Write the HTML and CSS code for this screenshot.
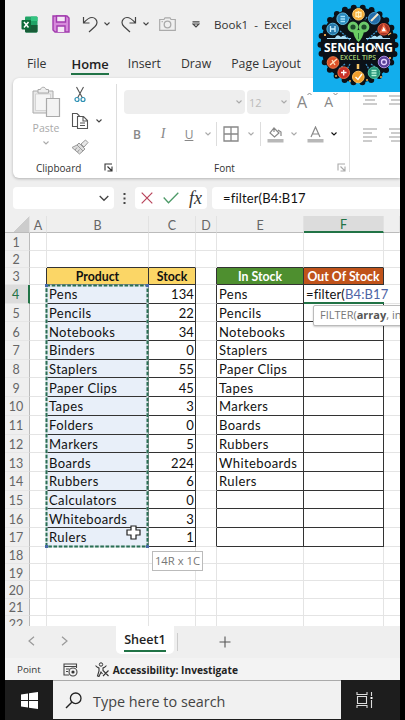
FILE: index.html
```
<!DOCTYPE html>
<html lang="en">
<head>
    <meta charset="UTF-8">
    <meta name="viewport" content="width=device-width, initial-scale=1.0">
    <title>Book1 - Excel</title>
    <link rel="stylesheet" href="styles.css">
</head>
<body>
    <svg class="defs" width="0" height="0">
        <symbol id="chevron" viewBox="0 0 8 6"><path d="M1.5 1.5 4 4 6.500 1.500" fill="none" stroke="currentColor" stroke-width="1.1"/></symbol>
        <symbol id="launcher" viewBox="0 0 9 9"><path d="M1 7.500V1H8M3.500 3.500 7.500 7.500M8 3.500V8H3.500" fill="none" stroke="currentColor" stroke-width="1.1"/></symbol>
    </svg>

    <div id="app">
        <header class="title-bar">
            <svg class="excel-icon" width="17" height="17" viewBox="0 0 17 17">
                <rect x="4" y="0.500" width="12.500" height="16" rx="1" fill="#21a366"/>
                <path d="M4 4.500H10V12H4Z" fill="#107c41"/>
                <path d="M10 .5H15.500L16.500 1.500V5H10Z" fill="#33c481"/>
                <path d="M10 9H16.500V15.500L15.500 16.500H5L4 15.500V12H10Z" fill="#185c37"/>
                <rect x="0.500" y="4" width="9.500" height="9.500" rx="1" fill="#0d6b39"/>
                <path d="M3 6 7.500 11.500M7.500 6 3 11.500" stroke="#fff" stroke-width="1.500"/>
            </svg>
            <svg class="save-icon" width="18" height="18" viewBox="0 0 18 18">
                <path d="M1 1H15L17 3V17H3L1 15Z" fill="#d68bdb" stroke="#a23bae" stroke-width="1.400"/>
                <path d="M4.500 1H13.500V7H4.500ZM5 17V11H13V17" fill="#f4e8f5" stroke="#a23bae" stroke-width="1.400"/>
            </svg>
            <svg class="undo-icon" width="16" height="17" viewBox="0 0 16 17"><path d="M1.500 1V7H7.500M1.500 7C5 3 7 1.500 10 1.500C13 1.500 15 4 15 6.500C15 8.500 14 9.500 13 10.500L7 16" fill="none" stroke="#444" stroke-width="1.200"/></svg>
            <svg class="chevron dark" width="8" height="6"><use href="#chevron"/></svg>
            <svg class="redo-icon" width="16" height="17" viewBox="0 0 16 17"><path d="M14.500 1V7H8.500M14.500 7C11 3 9 1.500 6 1.500C3 1.500 1 4 1 6.500C1 8.500 2 9.500 3 10.500L9 16" fill="none" stroke="#444" stroke-width="1.200"/></svg>
            <svg class="chevron dark" width="8" height="6"><use href="#chevron"/></svg>
            <svg class="camera-icon" width="17" height="14" viewBox="0 0 17 14"><path d="M.7 2.500H5L6 .8H11L12 2.500H16.300V13.300H.7Z" fill="none" stroke="#aaa" stroke-width="1.200"/><circle cx="8.500" cy="7.500" r="3.300" fill="none" stroke="#aaa" stroke-width="1.300"/><path d="M2.500 4.700H4" stroke="#aaa"/></svg>
            <svg class="more-icon" width="8" height="7" viewBox="0 0 8 7"><path d="M.5 .8H7.500M1 3 4 6 7 3Z" stroke="#444" fill="none" stroke-width="1.200"/></svg>
            <span class="doc-name">Book1&nbsp; -&nbsp; Excel</span>
        </header>

        <nav class="tabs">
            <span>File</span>
            <span class="active">Home</span>
            <span>Insert</span>
            <span>Draw</span>
            <span>Page Layout</span>
        </nav>

        <section class="ribbon">
            <div class="group clipboard">
                <div class="group-body">
                    <div class="paste">
                        <svg width="29" height="32" viewBox="0 0 29 32"><path d="M1 5H21V27H1Z" fill="#e9e9e9" stroke="#aaa"/><path d="M3.500 8H18.500V24.500H3.500Z" fill="#f5f5f5" stroke="#c8c8c8" stroke-width=".7"/><path d="M6 7V3.500H8.500C9 .5 13.500 .5 14 3.500H16.500V7Z" fill="#eee" stroke="#aaa"/><path d="M14.500 12.500H27.500V30.500H14.500Z" fill="#f3f3f3" stroke="#aaa" stroke-width="1.200"/></svg>
                        <span>Paste</span>
                        <svg class="chevron" width="8" height="6"><use href="#chevron"/></svg>
                    </div>
                    <div class="clip-tools">
                        <svg width="18" height="18" viewBox="0 0 18 18"><path d="M5.500 1 11.500 12M12.500 1 6.500 12" stroke="#555" stroke-width="1.100"/><circle cx="6" cy="13.500" r="2" fill="none" stroke="#2b8fb3" stroke-width="1.200"/><circle cx="12" cy="13.500" r="2" fill="none" stroke="#2b8fb3" stroke-width="1.200"/></svg>
                        <div class="copy">
                            <svg width="18" height="18" viewBox="0 0 18 18"><path d="M6 14.500H1.500V1.500H6L8.500 4M6.500 4.500H12.500L16.500 8.500V16.500H6.500ZM12 4.500V9H16.500M9 11H14M9 13.500H14" fill="none" stroke="#555" stroke-width="1.100"/></svg>
                            <svg class="chevron dark" width="8" height="6"><use href="#chevron"/></svg>
                        </div>
                        <svg width="18" height="18" viewBox="0 0 18 18"><path d="M10 6 14.500 2 17 4.500 13 9Z" fill="#e8e8e8" stroke="#999"/><path d="M8 5 14 11 12 13 6 7ZM6 7 1 9.500 8.500 16 12 13M4 12 6 9.500M6.500 14 8.500 11.500" fill="#ddd" stroke="#999"/></svg>
                    </div>
                </div>
                <div class="group-label"><span>Clipboard</span><svg width="9" height="9"><use href="#launcher"/></svg></div>
            </div>

            <div class="group font">
                <div class="group-body">
                    <div class="font-row">
                        <div class="combo family"><svg class="chevron" width="8" height="6"><use href="#chevron"/></svg></div>
                        <div class="combo size"><span>12</span><svg class="chevron" width="8" height="6"><use href="#chevron"/></svg></div>
                        <span class="grow">A<svg width="5" height="4" viewBox="0 0 5 4"><path d="M.5 3 2.500 1 4.500 3" fill="none" stroke="#888"/></svg></span>
                        <span class="shrink">A<svg width="5" height="4" viewBox="0 0 5 4"><path d="M.5 1 2.500 3 4.500 1" fill="none" stroke="#888"/></svg></span>
                    </div>
                    <div class="style-row">
                        <span class="tool bold">B</span>
                        <span class="tool italic">I</span>
                        <span class="tool underline">U</span>
                        <span class="drop"><svg class="chevron" width="8" height="6"><use href="#chevron"/></svg></span>
                        <span class="divider"></span>
                        <span class="tool"><svg width="16" height="16" viewBox="0 0 16 16"><path d="M1 1H15V15H1ZM8 1V15M1 8H15" fill="none" stroke="#888" stroke-width="1.300"/></svg></span>
                        <span class="drop wide"><svg class="chevron" width="8" height="6"><use href="#chevron"/></svg></span>
                        <span class="divider"></span>
                        <span class="tool"><svg width="17" height="17" viewBox="0 0 17 17"><path d="M7 2 12 7 7.500 11 3 7ZM7 2V6M11 4 14 6V10" fill="none" stroke="#888" stroke-width="1.200"/><rect x="0.500" y="13" width="16" height="3.500" fill="#b8b8b8"/></svg></span>
                        <span class="drop"><svg class="chevron" width="8" height="6"><use href="#chevron"/></svg></span>
                        <span class="tool font-color"><svg width="17" height="17" viewBox="0 0 17 17"><path d="M4 11 8.500 1 13 11M5.500 8H11.500" fill="none" stroke="#888" stroke-width="1.200"/><rect x="0.500" y="13" width="16" height="3.500" fill="#b8b8b8"/></svg></span>
                        <span class="drop"><svg class="chevron black" width="8" height="6"><use href="#chevron"/></svg></span>
                    </div>
                </div>
                <div class="group-label"><span>Font</span><svg width="9" height="9"><use href="#launcher"/></svg></div>
            </div>

            <div class="group align">
                <svg width="16" height="10" viewBox="0 0 16 10"><path d="M1 1H15M3 5H13M1 9H15" stroke="#999"/></svg>
                <svg width="16" height="10" viewBox="0 0 16 10"><path d="M1 1H15M3 5H13M1 9H15" stroke="#999"/></svg>
                <svg width="16" height="14" viewBox="0 0 16 14"><path d="M1 1H15M1 5H10M1 9H15M1 13H10" stroke="#999"/></svg>
                <svg width="16" height="14" viewBox="0 0 16 14"><path d="M1 1H15M3 5H13M1 9H15M3 13H13" stroke="#999"/></svg>
            </div>
        </section>

        <section class="formula-bar">
            <div class="name-box"><svg width="10" height="7" viewBox="0 0 10 7"><path d="M.7 1 5 5.300 9.300 1" fill="none" stroke="#444" stroke-width="1.300"/></svg></div>
            <svg class="dots" width="3" height="11" viewBox="0 0 3 11"><path d="M.5 0H2.500V2H.5ZM.5 4.500H2.500V6.500H.5ZM.5 9H2.500V11H.5Z" fill="#444"/></svg>
            <div class="fx-box">
                <svg width="12" height="12" viewBox="0 0 12 12"><path d="M.7 .7 11.300 11.300M11.300 .7 .7 11.300" stroke="#b8435a" stroke-width="1.200"/></svg>
                <svg width="16" height="12" viewBox="0 0 16 12"><path d="M.7 5.500 5.500 10.700 15.300 .8" fill="none" stroke="#4d9a68" stroke-width="1.300"/></svg>
                <span>fx</span>
            </div>
            <div class="formula">=filter(B4:B17</div>
        </section>

        <section class="sheet">
            <div id="grid"></div>
            <svg class="marquee" width="104" height="264">
                <rect class="gap" x="1.500" y="1.500" width="101" height="261"/>
                <rect x="1.500" y="1.500" width="101" height="261"/>
                <path d="M0 0H3V3H0ZM101 0H104V3H101ZM0 261H3V264H0ZM101 261H104V264H101Z" fill="#4668a8"/>
            </svg>
            <div class="hint">FILTER(<b>array</b>, in</div>
            <div class="size-tip">14R x 1C</div>
            <svg class="cross-cursor" width="15" height="15" viewBox="0 0 15 15"><path d="M5 1H10V5H14V10H10V14H5V10H1V5H5Z" fill="#fff" stroke="#222" stroke-width="1.200"/></svg>
        </section>

        <section class="sheet-tabs">
            <svg width="7" height="10" viewBox="0 0 7 10"><path d="M6 .7 1 5 6 9.300" fill="none" stroke="#999" stroke-width="1.200"/></svg>
            <svg width="7" height="10" viewBox="0 0 7 10"><path d="M1 .7 6 5 1 9.300" fill="none" stroke="#999" stroke-width="1.200"/></svg>
            <div class="sheet-tab"><span>Sheet1</span></div>
            <i class="tab-line"></i>
            <svg class="plus" width="12" height="12" viewBox="0 0 12 12"><path d="M6 .5V11.500M.5 6H11.500" stroke="#555" stroke-width="1.100"/></svg>
        </section>

        <section class="status-bar">
            <span class="mode">Point</span>
            <svg class="macro" width="15" height="14" viewBox="0 0 15 14"><path d="M6 12H1V1H13.500V5M1 3.500H13.500M3 6H6.500M3 8.500H5" fill="none" stroke="#444" stroke-width="1.100"/><circle cx="10" cy="9" r="4" fill="#f1f1f1" stroke="#444" stroke-width="1.100"/><circle cx="10" cy="9" r="1.600" fill="#333"/></svg>
            <svg class="access" width="15" height="15" viewBox="0 0 15 15"><circle cx="6" cy="2.500" r="1.700" fill="none" stroke="#333"/><path d="M1 3.500C.5 5 3 5 4 6V9L2.500 14L4 14.500L6 10L7.500 12M11 3.500C11.500 5 9 5 8 6V8.500L13.500 14M8 14 13.500 8.500" fill="none" stroke="#333" stroke-width="1.100"/></svg>
            <b>Accessibility: Investigate</b>
        </section>

        <footer class="taskbar">
            <div class="start"><svg width="17" height="17" viewBox="0 0 17 17"><path d="M0 2.500 7 1.500V8H0ZM8 1.300 17 0V8H8ZM0 9H7V15.500L0 14.500ZM8 9H17V17L8 15.700Z" fill="#fff"/></svg></div>
            <div class="search">
                <svg width="17" height="17" viewBox="0 0 17 17"><circle cx="10.700" cy="6.300" r="5.300" fill="none" stroke="#222" stroke-width="1.300"/><path d="M6.800 10.200 1 16" stroke="#222" stroke-width="1.400"/></svg>
                <span>Type here to search</span>
            </div>
            <div class="task-view"><svg width="18" height="16" viewBox="0 0 18 16"><path d="M1 0V2.500H11V0M1 16V13.500H11V16M1.500 4.500H10.500V11.500H1.500ZM15.500 0V4M15.500 8V16" fill="none" stroke="#ddd" stroke-width="1.100"/><rect x="14.500" y="5" width="2" height="2" fill="#fff"/></svg></div>
        </footer>

        <div class="logo">
            <svg width="87" height="92" viewBox="0 0 87 92">
                <circle cx="45" cy="45" r="37.500" fill="#0b1118"/>
                <circle cx="45" cy="45" r="37.500" fill="none" stroke="#0b1118" stroke-width="6" stroke-dasharray="0 9.060" stroke-linecap="round"/>
                <path d="M14 38H22Q24 33 28 37Q31 34 34 38H38V39H14ZM53 38H58Q61 34 64 37Q68 33 70 38H77V39H53Z" fill="#a9dcf5"/>
                <path d="M36 17 38 20M54 17 52 20M27 31 37 40M64 31 54 40M32 64 26 69M37 64 33 71M53 64 57 71M58 64 65 69" stroke="#3c8fc4" stroke-width="1.300" stroke-dasharray="2 1"/>
                <path d="M45 64V69" stroke="#f6c667" stroke-width="2.500"/>
                <g fill="#1d4a2a" stroke="#6cc96a" stroke-width="2.800"><circle cx="40" cy="27" r="4"/><circle cx="51" cy="27" r="4"/></g>
                <path d="M40 31Q45.500 29 51 31Q50 38 45.500 42Q41 38 40 31Z" fill="#6bcf63"/>
                <path d="M45.500 33V39" stroke="#2c7a3d"/>
                <g stroke-width="1">
                    <circle cx="29.700" cy="18.700" r="5.800" fill="#2788bd" stroke="#64c1e8"/>
                    <circle cx="45.500" cy="14.300" r="5.800" fill="#f3aa35" stroke="#ffd077"/>
                    <circle cx="61.300" cy="18.300" r="5.800" fill="#246ca9" stroke="#4aa5d9"/>
                    <circle cx="19.700" cy="29" r="5.800" fill="#2878aa" stroke="#55b6df"/>
                    <circle cx="70.700" cy="29.300" r="5.800" fill="#a93425" stroke="#db573c"/>
                    <circle cx="20" cy="62.500" r="5.800" fill="#dd5128" stroke="#f27b48"/>
                    <circle cx="30.700" cy="72.700" r="5.800" fill="#c93029" stroke="#ee6b3e"/>
                    <circle cx="45.300" cy="77" r="5.800" fill="#f09e2c" stroke="#ffc362"/>
                    <circle cx="61" cy="72.700" r="5.800" fill="#269479" stroke="#4ec39b"/>
                    <circle cx="71" cy="62" r="5.800" fill="#584097" stroke="#aa8add"/>
                </g>
                <g fill="none" stroke="#fff" stroke-width="1.300">
                    <path d="M27.500 16.500H32M27.500 19H32M27.500 21.500H32" stroke="#a5e3fb"/>
                    <path d="M43 12.500H48V16.500H43ZM45.500 11V18" stroke="#fff0bc"/>
                    <path d="M58 21 65 14" stroke="#f5e7c8" stroke-width="2"/>
                    <path d="M17.500 26V32M22 26V32M17.500 29H22" stroke="#c6efff"/>
                    <path d="M70.700 25 72.500 29 74 32H67.500L69 29Z" fill="#fff" stroke="#f06b43"/>
                    <path d="M17 65 24 59M19 60 22 65" stroke="#ffe0bc"/>
                    <path d="M28 72.500H33.500M30.700 70V75.500"/>
                    <path d="M42.500 77 45 79.500 49 74"/>
                    <path d="M58.500 70.500H63.500M58.500 73H63.500M58.500 75.500H63.500" stroke="#b7f3d8"/>
                    <circle cx="71" cy="62" r="2.500" stroke="#e5d3ff"/>
                </g>
                <path d="M11 35H13M12 34V36M76 58H78M77 57V59M22 76H24M67 77H69M36 81H38M53 80H55M75 35 78 33" stroke="#f0a94c" stroke-width="1.500"/>
                <text class="logo-name" x="11" y="51.800" textLength="69" lengthAdjust="spacingAndGlyphs">SENGHONG</text>
                <path d="M59 43 65 50H62L64 53" fill="#fff" stroke="#111" stroke-width=".6"/>
                <text class="logo-sub" x="27" y="60.300" textLength="36" lengthAdjust="spacingAndGlyphs">EXCEL TIPS</text>
            </svg>
        </div>
    </div>

    <script>
        const grid = document.getElementById("grid");
        const products = [
            ["Pens", 134], ["Pencils", 22], ["Notebooks", 34], ["Binders", 0],
            ["Staplers", 55], ["Paper Clips", 45], ["Tapes", 3], ["Folders", 0],
            ["Markers", 5], ["Boards", 224], ["Rubbers", 6], ["Calculators", 0],
            ["Whiteboards", 3], ["Rulers", 1]
        ];
        const inStock = ["Pens", "Pencils", "Notebooks", "Staplers", "Paper Clips", "Tapes",
            "Markers", "Boards", "Rubbers", "Whiteboards", "Rulers"];

        function addCell(text, className) {
            const cell = document.createElement("div");
            cell.className = "cell " + className;
            cell.innerHTML = text;
            grid.appendChild(cell);
        }

        // Column headers
        addCell("", "head corner");
        ["A", "B", "C", "D", "E", "F", ""].forEach(function (name) {
            addCell(name, "head" + (name === "F" ? " current-col" : ""));
        });

        for (let row = 1; row <= 22; row++) {
            const inTable = row >= 4 && row <= 17;
            addCell(row, "row-head" + (row === 4 ? " current-row" : ""));
            addCell("", row >= 3 && row <= 17 ? "edge" : "");
            if (row === 3) {
                addCell("Product", "data title yellow");
                addCell("Stock", "data title yellow");
                addCell("", "edge");
                addCell("In Stock", "data title green");
                addCell("Out Of Stock", "data title orange");
            } else if (inTable) {
                const item = products[row - 4];
                addCell(item[0], "data picked");
                addCell(item[1], "data number");
                addCell("", "edge");
                addCell(inStock[row - 4] || "", "data");
                addCell(row === 4 ? "=filter(<span>B4:B17</span>" : "", "data" + (row === 4 ? " editing" : ""));
            } else {
                for (let i = 0; i < 5; i++) {
                    addCell("", row === 2 && i !== 2 ? "above" : "");
                }
            }
            addCell("", "last");
        }
    </script>
</body>
</html>
```
FILE: styles.css
```
* {
    box-sizing: border-box;
}

body {
    margin: 0;
    background-color: #000;
    font-family: "Open Sans", "Noto Sans", sans-serif;
    color: #333;
}

svg {
    display: block;
    flex-shrink: 0;
}

.defs {
    position: absolute;
}

#app {
    position: relative;
    width: 395px;
    height: 720px;
    margin-left: 5px;
    background-color: #efefef;
    overflow: hidden;
}

.chevron {
    color: #aaa;
}

.chevron.dark {
    color: #444;
}

.chevron.black {
    color: #111;
}

/* Title bar and tabs */
.title-bar {
    display: flex;
    align-items: center;
    height: 48px;
    padding-left: 16px;
}

.save-icon {
    margin-left: 14px;
}

.undo-icon {
    margin: 0 5px 0 12px;
}

.redo-icon {
    margin: 0 5px 0 10px;
}

.camera-icon {
    margin-left: 9px;
}

.more-icon {
    margin-left: 16px;
}

.doc-name {
    margin-left: 14px;
    font-size: 11.6px;
    white-space: nowrap;
}

.tabs {
    display: flex;
    height: 30px;
    padding: 7px 0 0 22px;
    font-size: 12.3px;
    line-height: 18px;
    white-space: nowrap;
}

.tabs span {
    margin-right: 20px;
}

.tabs .active {
    height: 20px;
    margin: 0 19px 0 5px;
    border-bottom: 2px solid #217346;
    font-size: 12.9px;
    font-weight: 600;
    color: #222;
}

/* Ribbon */
.ribbon {
    display: flex;
    height: 100px;
    margin-left: 8px;
    background-color: #fff;
    border-radius: 6px 0 0 6px;
    box-shadow: 0 1px 3px rgba(0, 0, 0, 0.25);
}

.group {
    position: relative;
    display: flex;
    flex-direction: column;
    flex-shrink: 0;
}

.group::after {
    content: "";
    position: absolute;
    right: 0;
    top: 6px;
    bottom: 6px;
    width: 1px;
    background-color: #ddd;
}

.clipboard {
    width: 104px;
}

.clipboard .group-body {
    display: flex;
    height: 80px;
    padding: 8px 0 0 19px;
}

.paste {
    display: flex;
    flex-direction: column;
    align-items: center;
    width: 28px;
    font-size: 10.5px;
    line-height: 15px;
    color: #aaa;
}

.paste span {
    margin: 3px 0 4px;
}

.clip-tools {
    display: flex;
    flex-direction: column;
    gap: 8px;
    margin-left: 11px;
}

.copy {
    display: flex;
    align-items: center;
    gap: 6px;
}

.group-label {
    display: flex;
    align-items: center;
    height: 19px;
    font-size: 10px;
}

.clipboard .group-label span {
    margin-left: 23px;
    width: 68px;
}

.font {
    width: 233px;
}

.font .group-body {
    height: 80px;
    padding: 12px 0 0 7px;
}

.font-row,
.style-row {
    display: flex;
    align-items: center;
}

.combo {
    display: flex;
    align-items: center;
    height: 24px;
    padding: 0 2px;
    border-radius: 4px;
    background-color: #eee;
    font-size: 11px;
    color: #bbb;
}

.family {
    justify-content: flex-end;
    width: 121px;
}

.size {
    justify-content: space-between;
    width: 43px;
    margin-left: 2px;
}

.grow,
.shrink {
    display: flex;
    margin-left: 7px;
    font-size: 16px;
    line-height: 20px;
    color: #888;
}

.shrink {
    margin-left: 12px;
    font-size: 14px;
}

.style-row {
    margin-top: 8px;
    height: 24px;
    color: #888;
    font-size: 12px;
}

.tool {
    display: flex;
    justify-content: center;
    width: 26px;
}

.bold {
    font-weight: 600;
}

.italic {
    font-family: "Liberation Serif", serif;
    font-style: italic;
    font-size: 14px;
}

.underline {
    text-decoration: underline;
}

.drop {
    display: flex;
    justify-content: center;
    width: 11px;
}

.drop.wide {
    width: 13px;
}

.divider {
    width: 1px;
    height: 24px;
    margin: 0 1px 0 3px;
    background-color: #ddd;
}

.font-color {
    margin-left: 3px;
}

.font .group-label span {
    margin-left: 97px;
    width: 123px;
}

.font .group-label svg {
    color: #aaa;
}

.align {
    display: grid;
    grid-template-columns: 16px 16px;
    grid-template-rows: 10px 14px;
    gap: 23px 10px;
    padding: 17px 0 0 12px;
}

.align::after {
    display: none;
}

/* Formula bar */
.formula-bar {
    display: flex;
    align-items: center;
    height: 38px;
    padding: 2px 0 0 8px;
}

.name-box,
.fx-box,
.formula {
    display: flex;
    align-items: center;
    height: 22px;
    background-color: #fff;
    border-radius: 4px;
}

.name-box {
    justify-content: flex-end;
    width: 101px;
    padding-right: 5px;
}

.dots {
    margin: 0 9px;
}

.fx-box {
    gap: 10px;
    width: 72px;
    padding-left: 6px;
}

.fx-box span {
    font: italic 18px "Liberation Serif", serif;
}

.formula {
    flex: 1;
    margin-left: 5px;
    padding-left: 11px;
    border-radius: 4px 0 0 4px;
    font-family: Lato, sans-serif;
    font-size: 13px;
    letter-spacing: 0.15px;
    color: #111;
}

/* Worksheet */
.sheet {
    position: relative;
    height: 410px;
    overflow: hidden;
    background-color: #fff;
}

#grid {
    display: grid;
    grid-template-columns: 25px 17px 102px 47px 21px 87px 80px 16px;
    grid-template-rows: 17px 17.5px 17px 17.5px repeat(14, 18.7px) repeat(5, 17.3px);
}

.cell {
    display: flex;
    align-items: center;
    min-width: 0;
    padding: 2px 0 0 2px;
    border-right: 1px solid #e4e4e4;
    border-bottom: 1px solid #e4e4e4;
    font-family: Lato, sans-serif;
    font-size: 13px;
    letter-spacing: 0.4px;
    line-height: 15px;
    white-space: nowrap;
    color: #111;
}

.head,
.row-head {
    justify-content: center;
    padding: 2px 0 0;
    background-color: #efefef;
    font-size: 12.5px;
    letter-spacing: 0;
    color: #666;
}

.head {
    border-right-color: #e2e2e2;
    border-bottom-color: #bbb;
}

.row-head {
    padding-right: 2px;
    border-right-color: #bbb;
    border-bottom-color: #e6e6e6;
}

.corner {
    background: linear-gradient(135deg, #efefef 60%, #ccc 60%);
}

.current-col {
    background-color: #dcdcdc;
    border-bottom: 2px solid #217346;
    color: #217346;
}

.current-row {
    background-color: #dcdcdc;
    border-right: 2px solid #217346;
    color: #217346;
}

.edge,
.data {
    border-right-color: #333;
}

.above,
.data {
    border-bottom-color: #333;
}

.title {
    justify-content: center;
    padding: 2px 0 0;
    font-weight: bold;
    font-size: 12.3px;
    letter-spacing: 0;
}

.yellow {
    background-color: #fbd666;
}

.green {
    background-color: #4e8f2f;
    color: #fff;
}

.orange {
    background-color: #c0531a;
    color: #fff;
}

.picked {
    background-color: #e8eff9;
}

.number {
    justify-content: flex-end;
    padding-right: 1px;
    letter-spacing: 0.1px;
}

.editing {
    border-color: #217346;
    border-bottom-width: 2px;
    border-right: none;
    letter-spacing: 0.12px;
}

.editing span {
    color: #4d64a5;
}

.last {
    border-right: none;
}

.marquee {
    position: absolute;
    left: 40px;
    top: 68px;
}

.marquee rect {
    fill: none;
    stroke: #2a6f55;
    stroke-width: 2;
    stroke-dasharray: 3.6 1.6;
}

.marquee .gap {
    stroke: #d5e2e4;
    stroke-dasharray: none;
}

.hint,
.size-tip {
    position: absolute;
    border: 1px solid #bbb;
    background-color: #fff;
    color: #777;
    white-space: nowrap;
}

.hint {
    left: 308px;
    top: 89px;
    width: 92px;
    height: 21px;
    padding-left: 6px;
    border-radius: 2px;
    font-size: 11px;
    line-height: 18px;
    box-shadow: 0 1px 2px rgba(0, 0, 0, 0.2);
}

.hint b {
    color: #555;
}

.size-tip {
    left: 147px;
    top: 335px;
    width: 51px;
    height: 20px;
    font-size: 11.3px;
    line-height: 18px;
    text-align: center;
}

.cross-cursor {
    position: absolute;
    left: 121px;
    top: 309px;
}

/* Sheet tabs and status bar */
.sheet-tabs {
    display: flex;
    height: 32px;
    padding-left: 23px;
}

.sheet-tabs > svg {
    margin: 10px 26px 0 0;
}

.sheet-tab {
    width: 58px;
    height: 28px;
    margin-left: 22px;
    padding: 5px 8px 0;
    border-radius: 0 0 5px 5px;
    background-color: #fff;
}

.sheet-tab span {
    display: block;
    height: 21px;
    border-bottom: 2px solid #217346;
    font-size: 12.6px;
    font-weight: 600;
    line-height: 18px;
    text-align: center;
    color: #222;
}

.tab-line {
    width: 1px;
    height: 18px;
    margin: 7px 41px 0 3px;
    background-color: #ccc;
}

.status-bar {
    display: flex;
    align-items: center;
    height: 22px;
    padding: 1px 0 0 12px;
    background-color: #f3f3f3;
    font-size: 9.8px;
    white-space: nowrap;
}

.macro {
    margin-left: 22px;
}

.access {
    margin: 0 3px 0 17px;
}

.status-bar b {
    font-size: 10.2px;
    color: #222;
}

/* Taskbar */
.taskbar {
    display: flex;
    height: 40px;
    background-color: #1d1d1d;
}

.start {
    display: flex;
    align-items: center;
    justify-content: center;
    width: 48px;
}

.search {
    display: flex;
    align-items: center;
    width: 288px;
    height: 39px;
    padding-left: 12px;
    border-top: 1px solid #aaa;
    background-color: #f1f1f1;
    font-size: 14.4px;
    color: #444;
}

.search span {
    margin: 2px 0 0 11px;
}

.task-view {
    display: flex;
    align-items: center;
    padding-left: 15px;
}

.logo {
    position: absolute;
    top: 0;
    right: 0;
    width: 87px;
    height: 92px;
    background-color: #12aeed;
}

.logo-name {
    font: bold 12px "Open Sans", sans-serif;
    fill: #fff;
}

.logo-sub {
    font: 600 7px "Open Sans", sans-serif;
    fill: #a4cf73;
}
```
